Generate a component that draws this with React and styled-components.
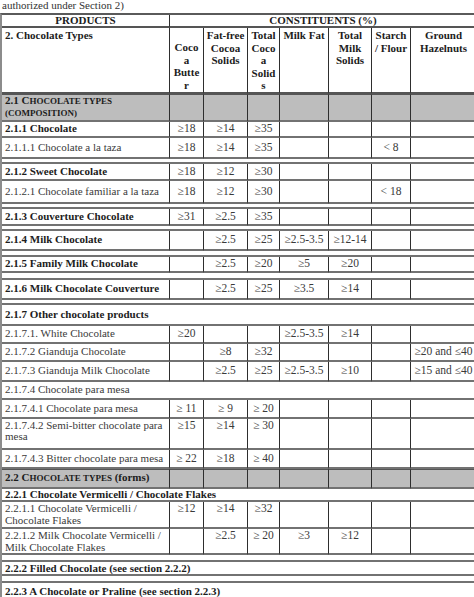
import React from 'react';
import styled, { createGlobalStyle } from 'styled-components';

const widths = [168, 34, 44, 32, 49, 43, 39, 65];

const headers = [
  { text: 'Coco\na\nButte\nr', pad: 13 },
  { text: 'Fat-free\nCocoa\nSolids' },
  { text: 'Total\nCoco\na\nSolid\ns' },
  { text: 'Milk Fat' },
  { text: 'Total\nMilk\nSolids' },
  { text: 'Starch\n/ Flour' },
  { text: 'Ground\nHazelnuts' },
];

const rows = [
  { kind: 'section', h: 28, num: '2.1', tail: 'composition' },
  { h: 16, bold: true, label: '2.1.1 Chocolate', v: ['≥18', '≥14', '≥35'] },
  { h: 21, label: '2.1.1.1 Chocolate a la taza', v: ['≥18', '≥14', '≥35', '', '', '< 8'] },
  { kind: 'gap', h: 5 },
  { h: 17, bold: true, label: '2.1.2 Sweet Chocolate', v: ['≥18', '≥12', '≥30'] },
  { h: 23, label: '2.1.2.1 Chocolate familiar a la taza', v: ['≥18', '≥12', '≥30', '', '', '< 18'] },
  { kind: 'gap', h: 5 },
  { h: 17, bold: true, label: '2.1.3 Couverture Chocolate', v: ['≥31', '≥2.5', '≥35'] },
  { kind: 'gap', h: 5 },
  { h: 20, bold: true, label: '2.1.4 Milk Chocolate', v: ['', '≥2.5', '≥25', '≥2.5-3.5', '≥12-14'] },
  { kind: 'gap', h: 6 },
  { h: 16, bold: true, label: '2.1.5 Family Milk Chocolate', v: ['', '≥2.5', '≥20', '≥5', '≥20'] },
  { kind: 'gap', h: 7 },
  { h: 20, bold: true, label: '2.1.6 Milk Chocolate Couverture', v: ['', '≥2.5', '≥25', '≥3.5', '≥14'] },
  { kind: 'gap', h: 5 },
  { kind: 'full', h: 21, bold: true, label: '2.1.7 Other chocolate products' },
  { h: 18, label: '2.1.7.1. White Chocolate', v: ['≥20', '', '', '≥2.5-3.5', '≥14'] },
  { h: 18, label: '2.1.7.2 Gianduja Chocolate', v: ['', '≥8', '≥32', '', '', '', '≥20 and ≤40'] },
  { h: 20, label: '2.1.7.3 Gianduja Milk Chocolate', v: ['', '≥2.5', '≥25', '≥2.5-3.5', '≥10', '', '≥15 and ≤40'] },
  { kind: 'full', h: 18, label: '2.1.7.4 Chocolate para mesa' },
  { h: 19, label: '2.1.7.4.1 Chocolate para mesa', v: ['≥ 11', '≥ 9', '≥ 20'] },
  { h: 31, top: true, label: '2.1.7.4.2 Semi-bitter chocolate para mesa', v: ['≥15', '≥14', '≥ 30'] },
  { h: 19, label: '2.1.7.4.3 Bitter chocolate para mesa', v: ['≥ 22', '≥18', '≥ 40'] },
  { kind: 'section', h: 20, num: '2.2', tail: 'forms' },
  { kind: 'full', h: 13, bold: true, label: '2.2.1 Chocolate Vermicelli / Chocolate Flakes' },
  { h: 27, top: true, label: '2.2.1.1 Chocolate Vermicelli /\nChocolate Flakes', v: ['≥12', '≥14', '≥32'] },
  { h: 26, top: true, label: '2.2.1.2 Milk Chocolate Vermicelli /\nMilk Chocolate Flakes', v: ['', '≥2.5', '≥ 20', '≥3', '≥12'] },
  { kind: 'gap', h: 7 },
  { kind: 'full', h: 14, bold: true, label: '2.2.2 Filled Chocolate (see section 2.2.2)' },
  { kind: 'gap', h: 7 },
  { kind: 'full', h: 18, bold: true, label: '2.2.3 A Chocolate or Praline (see section 2.2.3)' },
];

function SectionLabel({ num, tail }) {
  return (
    <>
      {num} C<Small>hocolate types</Small>{' '}
      {tail === 'composition' ? <Small>(composition)</Small> : '(forms)'}
    </>
  );
}

export default function App() {
  return (
    <Page>
      <GlobalStyle />
      <Caption>authorized under Section 2)</Caption>
      <Sheet>
        <colgroup>
          {widths.map((w, i) => <col key={i} style={{ width: w }} />)}
        </colgroup>
        <tbody>
          <tr>
            <Cell $h={12} $lh={11} $bold $dark>PRODUCTS</Cell>
            <Cell $h={12} $lh={11} $bold $dark $last colSpan={7}>CONSTITUENTS (%)</Cell>
          </tr>
          <tr>
            <Cell $h={65} $lh={12.6} $bold $first $top $dark>2. Chocolate Types</Cell>
            {headers.map((hd, i) => (
              <Cell key={i} $h={65} $lh={12.6} $bold $top $dark $pad={hd.pad} $last={i === 6}>
                {hd.text}
              </Cell>
            ))}
          </tr>
          {rows.map((r, i) => {
            if (r.kind === 'gap') {
              return (
                <tr key={i}>
                  <Cell $h={r.h} $last colSpan={8} />
                </tr>
              );
            }
            if (r.kind === 'full') {
              return (
                <tr key={i}>
                  <Cell $h={r.h} $first $bold={r.bold} $last colSpan={8}>{r.label}</Cell>
                </tr>
              );
            }
            if (r.kind === 'section') {
              return (
                <tr key={i}>
                  <Cell $h={r.h} $lh={11.5} $first $bold $gray $rule>
                    <SectionLabel num={r.num} tail={r.tail} />
                  </Cell>
                  {widths.slice(1).map((_, j) => (
                    <Cell key={j} $h={r.h} $gray $rule $last={j === 6} />
                  ))}
                </tr>
              );
            }
            const vals = Array.from({ length: 7 }, (_, j) => (r.v && r.v[j]) || '');
            return (
              <tr key={i}>
                <Cell $h={r.h} $first $bold={r.bold} $top={r.top}>{r.label}</Cell>
                {vals.map((v, j) => (
                  <Cell key={j} $h={r.h} $top={r.top} $last={j === 6} $num>{v}</Cell>
                ))}
              </tr>
            );
          })}
        </tbody>
      </Sheet>
    </Page>
  );
}

const GlobalStyle = createGlobalStyle`
  html, body {
    margin: 0;
    padding: 0;
    background: #fff;
  }
  body {
    width: 474px;
    height: 597px;
    overflow: hidden;
    font-family: "Liberation Serif", "Times New Roman", serif;
  }
`;

const Page = styled.div`
  width: 474px;
  height: 597px;
  overflow: hidden;
`;

const Caption = styled.div`
  height: 13px;
  padding-left: 2px;
  font-size: 11px;
  line-height: 11px;
  color: #333;
`;

const Sheet = styled.table`
  width: 474px;
  table-layout: fixed;
  border-collapse: separate;
  border-spacing: 0;
  border-top: 2px solid #5a5a5a;
  border-left: 2px solid #8c8c8c;
`;

const Cell = styled.td`
  box-sizing: border-box;
  height: ${(p) => p.$h}px;
  padding: ${(p) => (p.$pad ? `${p.$pad}px 1px 0` : p.$top ? '1px 1px 0' : '0 1px')};
  padding-left: ${(p) => (p.$first ? '3px' : '1px')};
  border-top: ${(p) => (p.$rule ? '1px solid #555' : 'none')};
  border-right: ${(p) => (p.$last ? 'none' : '1px solid #2e2e2e')};
  border-bottom: ${(p) => (p.$dark ? '2px solid #555' : '2px solid #727272')};
  background: ${(p) => (p.$gray ? '#bdbdbd' : 'transparent')};
  text-align: ${(p) => (p.$first ? 'left' : 'center')};
  vertical-align: ${(p) => (p.$top ? 'top' : 'middle')};
  font-size: ${(p) => (p.$num ? 11.5 : 11)}px;
  line-height: ${(p) => p.$lh || 11.5}px;
  font-weight: ${(p) => (p.$bold ? 700 : 400)};
  color: ${(p) => (p.$bold ? '#1c1c1c' : '#3a3a3a')};
  white-space: pre-line;
  overflow: hidden;
`;

const Small = styled.span`
  font-size: 9px;
  text-transform: uppercase;
`;
